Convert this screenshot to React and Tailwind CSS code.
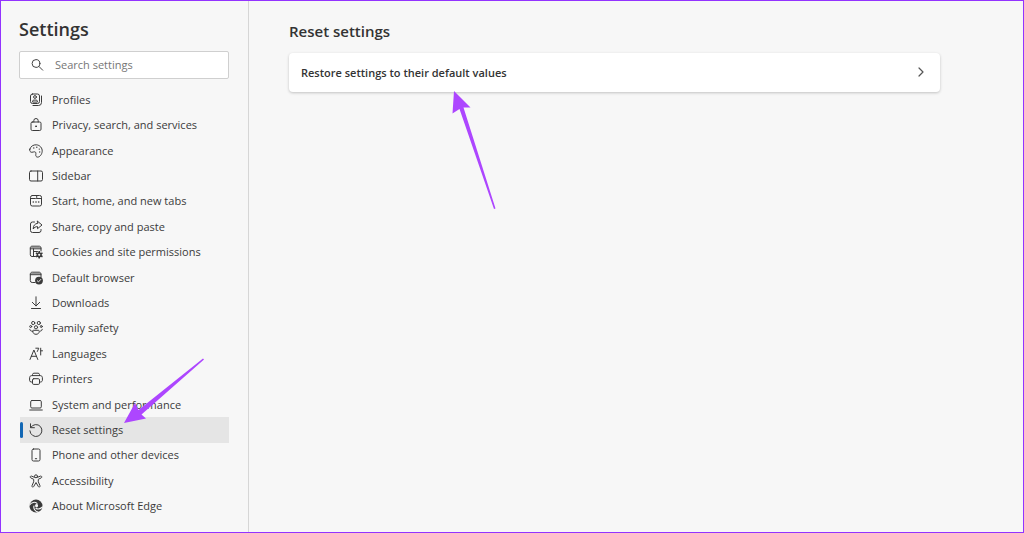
const line = {
  fill: "none",
  stroke: "currentColor",
  strokeWidth: 1,
  strokeLinecap: "round",
  strokeLinejoin: "round",
};

function Icon({ children }) {
  return (
    <svg viewBox="0 0 14 14" className="size-3.5 shrink-0" aria-hidden="true" {...line}>
      {children}
    </svg>
  );
}

const items = [
  {
    label: "Profiles",
    icon: (
      <Icon>
        <rect x="1.5" y="1" width="9" height="9.5" rx="2" />
        <circle cx="6" cy="4" r="1.4" />
        <path d="M3.600 8.700V8.100c0-.6.500-1 1.200-1h2.400c.7 0 1.200.4 1.200 1v.6Z" />
        <path d="M12.500 3v6.500a3 3 0 0 1-3 3H4" />
      </Icon>
    ),
  },
  {
    label: "Privacy, search, and services",
    icon: (
      <Icon>
        <rect x="2" y="4" width="10" height="8.500" rx="1.300" />
        <path d="M4.800 4V2.700a2.200 2.200 0 0 1 4.400 0V4" />
        <circle cx="7" cy="8.300" r=".5" fill="currentColor" />
      </Icon>
    ),
  },
  {
    label: "Appearance",
    icon: (
      <Icon>
        <path d="M.8 5.200C1.600 2.300 4.400.6 7.400.8c3.500.3 6 3.200 5.800 6.500-.3 3.200-2.400 5.900-4.700 5.800-1.400-.1-1.900-1.200-1.700-2.500.2-1.400.2-2.600-1.100-2.800-1.100-.2-1.800.6-2.900.5C1.200 8.200.3 6.900.8 5.200Z" />
        <g fill="currentColor" stroke="none">
          <circle cx="4.800" cy="4" r=".7" />
          <circle cx="7.800" cy="3.300" r=".7" />
          <circle cx="10.300" cy="5.100" r=".7" />
          <circle cx="10.700" cy="8" r=".7" />
        </g>
      </Icon>
    ),
  },
  {
    label: "Sidebar",
    icon: (
      <Icon>
        <rect x=".5" y="2" width="13" height="10" rx="1.500" />
        <path d="M8.700 2v10" />
      </Icon>
    ),
  },
  {
    label: "Start, home, and new tabs",
    icon: (
      <Icon>
        <rect x="1.500" y="1.500" width="11" height="10.500" rx="1.800" />
        <path d="M1.500 4.500h5.200c.8 0 1-.4 1-1V1.700M7.700 4.500h4.800" />
        <g fill="currentColor" stroke="none">
          <circle cx="4.300" cy="8" r=".8" />
          <circle cx="7" cy="8" r=".8" />
          <circle cx="9.700" cy="8" r=".8" />
        </g>
      </Icon>
    ),
  },
  {
    label: "Share, copy and paste",
    icon: (
      <Icon>
        <path d="M5.500 2H3.500a2 2 0 0 0-2 2v6.500a2 2 0 0 0 2 2H10a2 2 0 0 0 2-2V9.500" />
        <path d="M8.500 1.200 13 5 8.500 8.700V6.600C6.500 6.600 5.200 7.500 4.200 9c0-3.300 1.600-5.400 4.300-5.700Z" />
      </Icon>
    ),
  },
  {
    label: "Cookies and site permissions",
    icon: (
      <Icon>
        <path d="M6.500 11.500H3a1.700 1.700 0 0 1-1.700-1.700V2.900C1.300 1.900 2 1.200 3 1.200h7.300c1 0 1.700.7 1.700 1.700V6M1.300 3.800H12M4.500 3.800v7.500M4.500 6.500h4" />
        <path d="M2 2.500h9.500" strokeOpacity=".5" />
        <g strokeWidth="1.600" strokeLinecap="butt">
          <path d="M10.200 6v7.600M6.900 7.900l6.600 3.800M13.500 7.900l-6.600 3.800" />
        </g>
        <circle cx="10.200" cy="9.800" r="2.600" fill="currentColor" stroke="none" />
        <circle cx="10.200" cy="9.800" r="1.100" fill="#f7f7f7" stroke="none" />
      </Icon>
    ),
  },
  {
    label: "Default browser",
    icon: (
      <Icon>
        <path d="M6 11.500H3.200a1.900 1.900 0 0 1-1.900-1.900V3.100c0-1 .8-1.900 1.900-1.900h6.900c1 0 1.900.8 1.900 1.900v3M1.300 3.700H12" />
        <path d="M2 2.500h9.500" strokeOpacity=".5" />
        <circle cx="10" cy="9.600" r="3.900" fill="currentColor" stroke="none" />
        <path d="m8.300 9.800 1.200 1.100 2.300-2.500" stroke="#f7f7f7" strokeWidth=".9" />
      </Icon>
    ),
  },
  {
    label: "Downloads",
    icon: (
      <Icon>
        <path d="M7 .8v9M3.300 6.300 7 10l3.700-3.700M2.500 12.500h9" />
      </Icon>
    ),
  },
  {
    label: "Family safety",
    icon: (
      <Icon>
        <circle cx="4.200" cy="2" r="1.600" />
        <circle cx="9.800" cy="2" r="1.600" />
        <circle cx="1.700" cy="5.500" r="1" />
        <circle cx="12.300" cy="5.500" r="1" />
        <circle cx="7" cy="6.300" r="1.600" />
        <path d="M3.700 10.200c0-.6.400-.9.900-.9h4.800c.5 0 .9.300.9.900 0 2-1.500 3.100-3.300 3.100s-3.300-1.100-3.300-3.100ZM.8 8.300c.2 1.200.8 1.700 1.700 1.800M13.200 8.300c-.2 1.200-.8 1.700-1.700 1.800" />
      </Icon>
    ),
  },
  {
    label: "Languages",
    icon: (
      <Icon>
        <path d="M1 12.500 4.900 3l3.900 9.500M2.300 9.300h5.200M6.800 1.200h3L8.300 4.500M11.700 8V1.200M11.700 3.800h1.800" />
      </Icon>
    ),
  },
  {
    label: "Printers",
    icon: (
      <Icon>
        <path d="M3.500 10H2.300A1.700 1.700 0 0 1 .6 8.300V5.700c0-1.200.9-2.100 2.100-2.100h8.600c1.200 0 2.100.9 2.100 2.100v2.600c0 .9-.8 1.700-1.700 1.700h-1.200M3.500 3.600v-1c0-.8.6-1.400 1.400-1.400h4.200c.8 0 1.400.6 1.400 1.400v1" />
        <rect x="3.500" y="6.700" width="7" height="5.700" rx="1.200" />
      </Icon>
    ),
  },
  {
    label: "System and performance",
    icon: (
      <Icon>
        <rect x="1.700" y="2.500" width="10.600" height="7.500" rx="1.200" />
        <path d="M.7 12h12.600" />
      </Icon>
    ),
  },
  {
    label: "Reset settings",
    selected: true,
    icon: (
      <Icon>
        <path d="M1.500.8v3.900h3.900M1.700 4.500a6 6 0 1 1-.8 3.300" />
      </Icon>
    ),
  },
  {
    label: "Phone and other devices",
    icon: (
      <Icon>
        <rect x="3" y="1" width="8" height="12" rx="1.500" />
        <path d="M6.300 10.700h1.400" />
      </Icon>
    ),
  },
  {
    label: "Accessibility",
    icon: (
      <Icon>
        <circle cx="7" cy="2.300" r="1.500" />
        <path d="M5.400 3.300 2.600 2.100c-1.200-.5-2 1.200-.8 1.800L4.700 5.300v2.500L3 11.700c-.5 1.200 1.200 1.900 1.700.8L7 8.500l2.300 4c.5 1.100 2.200.4 1.700-.8L9.300 7.800V5.300l2.900-1.400c1.200-.6.4-2.300-.8-1.800L8.600 3.300" />
      </Icon>
    ),
  },
  {
    label: "About Microsoft Edge",
    icon: (
      <Icon>
        <circle cx="7" cy="7" r="6.500" fill="currentColor" stroke="none" />
        <g stroke="#f7f7f7" strokeWidth="1.100">
          <path d="M.6 6C2.200 3.200 6 2.500 8 4.300" />
          <path d="M5 7c-.8 2.500 1 5.600 4.300 6.100" />
          <path d="M7 9.400c2 .9 4.700.4 6.500-1.400" />
        </g>
        <path d="M8.600 5.200c.9 1.200.5 2.700-.8 3.400C6.300 8.300 5.700 6.800 6.300 5.500c.7-.7 1.600-.8 2.300-.3Z" fill="#f7f7f7" stroke="none" />
      </Icon>
    ),
  },
];

function NavItem({ label, icon, selected }) {
  return (
    <li className="relative flex flex-1">
      <a
        href="#"
        aria-current={selected ? "page" : undefined}
        className={
          selected
            ? "flex flex-1 items-center bg-[#e5e5e5]"
            : "flex flex-1 items-center hover:bg-[#eeeeee]"
        }
      >
        <span className={selected ? "h-4 w-[3px] rounded-sm bg-[#1267b4]" : "h-4 w-[3px]"} />
        <span className="ml-1.5 flex items-center gap-[9px] text-[#3b3b3b]">
          {icon}
          <span className="text-[11px] leading-4 whitespace-nowrap">{label}</span>
        </span>
      </a>
      {selected && (
        <svg
          viewBox="0 0 80 66"
          className="pointer-events-none absolute bottom-[19px] left-[104px] h-[66px] w-20"
          aria-hidden="true"
        >
          <path d="M0 65 11 45 14.500 52 79 .5 80 1.500 17.500 56.500 22 60.500Z" fill="#ad46ff" />
        </svg>
      )}
    </li>
  );
}

export default function App() {
  return (
    <div className="flex min-h-screen border border-[#9333ff] bg-[#f7f7f7] font-['Open_Sans','Noto_Sans',sans-serif] text-[#333333]">
      <aside className="flex w-62 shrink-0 flex-col border-r border-[#d6d6d6] pt-4 pr-[19px] pb-[13px] pl-[18px]">
        <h1 className="text-[18px] leading-6 font-semibold">Settings</h1>
        <label className="mt-[10px] flex h-7 items-center rounded-xs border border-[#cfcfcf] bg-white pl-[11px]">
          <svg viewBox="0 0 14 14" className="size-3.5 shrink-0 text-[#444444]" aria-hidden="true" {...line}>
            <circle cx="5" cy="5.500" r="3.900" />
            <path d="m8 8.500 3.700 3.700" />
          </svg>
          <input
            type="search"
            aria-label="Search settings"
            placeholder="Search settings"
            className="ml-2.5 min-w-0 flex-1 bg-transparent text-[11px] leading-4 outline-none placeholder:text-[#767676]"
          />
        </label>
        <nav aria-label="Settings" className="mt-2 ml-px flex flex-1 flex-col">
          <ul className="flex flex-1 flex-col">
            {items.map((item) => (
              <NavItem key={item.label} {...item} />
            ))}
          </ul>
        </nav>
      </aside>
      <main className="min-w-0 flex-1 pt-[18px] pr-10 pl-10">
        <h2 className="text-[15px] leading-6 font-semibold">Reset settings</h2>
        <div className="relative mt-[10px] max-w-[651px]">
          <button
            type="button"
            className="flex h-[39px] w-full items-center justify-between rounded-sm bg-white px-3 text-left shadow-[0_1px_3px_rgba(0,0,0,0.22)]"
          >
            <span className="text-[11px] leading-4 font-semibold">Restore settings to their default values</span>
            <svg viewBox="0 0 14 14" className="size-3.5 text-[#555555]" aria-hidden="true" {...line}>
              <path d="M5 2 9 6 5 10" strokeWidth="1.200" />
            </svg>
          </button>
          <svg
            viewBox="0 0 44 119"
            className="pointer-events-none absolute top-[38px] left-[163px] h-[119px] w-11"
            aria-hidden="true"
          >
            <path d="M2 0 18.500 16.500 11.500 16.500 43.500 117.500 42 118 7.500 18 .5 22.500Z" fill="#ad46ff" />
          </svg>
        </div>
      </main>
    </div>
  );
}
